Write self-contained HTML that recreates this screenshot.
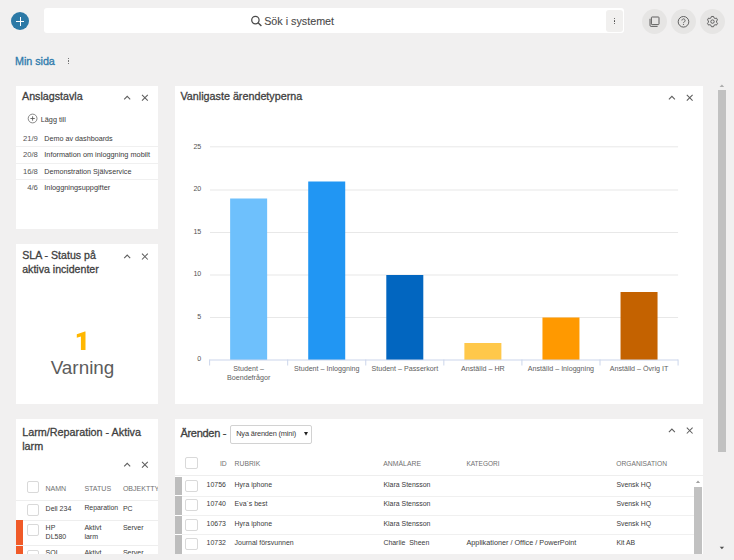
<!DOCTYPE html>
<html><head><meta charset="utf-8">
<style>
*{margin:0;padding:0;box-sizing:border-box}
html,body{width:734px;height:560px;overflow:hidden;background:#f1f0f0;font-family:"Liberation Sans",sans-serif;color:#3a3a3a}
.a{position:absolute}
.t{position:absolute;white-space:nowrap;line-height:1}
svg.a{overflow:visible}
.hs{-webkit-text-stroke:0.3px currentColor}
.cb{position:absolute;width:12.4px;height:12px;border:1px solid #d9d9d9;border-radius:2px;background:#fff}
</style></head><body>

<div class="a" style="left:11px;top:12px;width:18px;height:18px;background:#2c79a6;border-radius:50%"></div>
<div class="a" style="left:15.9px;top:20.85px;width:8.6px;height:1.15px;background:#fff;"></div>
<div class="a" style="left:19.72px;top:17.2px;width:1.15px;height:8.6px;background:#fff;"></div>
<div class="a" style="left:44px;top:7.9px;width:580px;height:25.6px;background:#fff;border-radius:3px"></div>
<svg class="a" style="left:0;top:0" width="1" height="1"><circle cx="255.4" cy="20.1" r="3.7" fill="none" stroke="#4a4a4a" stroke-width="1.25"/><line x1="258.1" y1="22.8" x2="261.4" y2="26.1" stroke="#4a4a4a" stroke-width="1.35"/></svg>
<div class="t hs" style="left:264.20px;top:15.76px;font-size:10.75px;color:#4a4a4a;-webkit-text-stroke:0.1px currentColor;">Sök i systemet</div>
<div class="a" style="left:606px;top:10px;width:16.5px;height:22px;background:#f1f0ef;border-radius:3px"></div>
<div class="a" style="left:613.5px;top:17.55px;width:1.5px;height:1.5px;background:#444;border-radius:50%"></div>
<div class="a" style="left:613.5px;top:20.05px;width:1.5px;height:1.5px;background:#444;border-radius:50%"></div>
<div class="a" style="left:613.5px;top:22.55px;width:1.5px;height:1.5px;background:#444;border-radius:50%"></div>
<div class="a" style="left:642px;top:8.5px;width:25px;height:25px;background:#e6e5e4;border-radius:50%"></div>
<div class="a" style="left:671px;top:8.5px;width:25px;height:25px;background:#e6e5e4;border-radius:50%"></div>
<div class="a" style="left:700px;top:8.5px;width:25px;height:25px;background:#e6e5e4;border-radius:50%"></div>
<svg class="a" style="left:642px;top:8.5px" width="25" height="25" viewBox="0 0 25 25">
 <rect x="9.4" y="8.0" width="7.6" height="7.6" rx="0.7" fill="none" stroke="#595959" stroke-width="0.95"/>
 <path d="M8.0 9.8 v6.5 a1.1 1.1 0 0 0 1.1 1.1 h6.5" fill="none" stroke="#595959" stroke-width="0.95"/>
</svg>
<svg class="a" style="left:671px;top:8.5px" width="25" height="25" viewBox="0 0 25 25">
 <circle cx="12.5" cy="12.8" r="5.3" fill="none" stroke="#595959" stroke-width="0.95"/>
 <path d="M10.9 11.5 a1.6 1.6 0 1 1 2.45 1.35 c-0.55 0.35 -0.85 0.65 -0.85 1.25" fill="none" stroke="#595959" stroke-width="0.95"/>
 <circle cx="12.5" cy="15.5" r="0.6" fill="#595959"/>
</svg>
<svg class="a" style="left:700px;top:8.5px" width="25" height="25" viewBox="0 0 25 25">
 <g transform="translate(12.5 12.6) scale(0.9) translate(-12.5 -12.5)">
 <circle cx="12.5" cy="12.5" r="1.9" fill="none" stroke="#595959" stroke-width="1.05"/>
 <path d="M11.3 6.8 h2.4 l0.4 1.5 l1.3 0.75 l1.5 -0.45 l1.2 2.1 l-1.1 1.1 v1.4 l1.1 1.1 l-1.2 2.1 l-1.5 -0.45 l-1.3 0.75 l-0.4 1.5 h-2.4 l-0.4 -1.5 l-1.3 -0.75 l-1.5 0.45 l-1.2 -2.1 l1.1 -1.1 v-1.4 l-1.1 -1.1 l1.2 -2.1 l1.5 0.45 l1.3 -0.75 z" fill="none" stroke="#595959" stroke-width="1.05" stroke-linejoin="round"/>
 </g>
</svg>
<div class="t hs" style="left:15.00px;top:56.22px;font-size:10.8px;color:#307cad;letter-spacing:-0.05px;-webkit-text-stroke:0.32px currentColor;">Min sida</div>
<div class="a" style="left:67.5px;top:58.1px;width:1.2px;height:1.2px;background:#777;"></div>
<div class="a" style="left:67.5px;top:60.4px;width:1.2px;height:1.2px;background:#777;"></div>
<div class="a" style="left:67.5px;top:62.699999999999996px;width:1.2px;height:1.2px;background:#777;"></div>
<div class="a" style="left:16px;top:86px;width:142px;height:143.2px;background:#fff;"></div>
<div class="a" style="left:16px;top:243.8px;width:142px;height:160.2px;background:#fff;"></div>
<div class="a" style="left:16px;top:418.8px;width:142px;height:135px;background:#fff;"></div>
<div class="a" style="left:175px;top:86px;width:528px;height:318.1px;background:#fff;"></div>
<div class="a" style="left:175px;top:418.8px;width:528px;height:134.8px;background:#fff;"></div>
<div class="t hs" style="left:22.00px;top:91.11px;font-size:10.7px;color:#404040;">Anslagstavla</div>
<svg class="a" style="left:0;top:0" width="1" height="1"><path d="M124.20 99.40 L127.20 96.30 L130.20 99.40" fill="none" stroke="#5e5e5e" stroke-width="1.05"/><path d="M142.00 94.90 L147.80 100.70 M147.80 94.90 L142.00 100.70" fill="none" stroke="#5e5e5e" stroke-width="1.05"/></svg>
<svg class="a" style="left:0;top:0" width="1" height="1"><circle cx="32.6" cy="118.5" r="4.4" fill="none" stroke="#6a6a6a" stroke-width="0.8"/><path d="M32.6 116.3 V120.7 M30.4 118.5 H34.8" stroke="#555" stroke-width="0.85"/></svg>
<div class="t" style="left:40.80px;top:115.84px;font-size:7.25px;color:#3a3a3a;">Lägg till</div>
<div class="t" style="left:7.60px;width:30px;text-align:right;top:134.81px;font-size:7.7px;color:#555;letter-spacing:-0.1px;">21/9</div>
<div class="t" style="left:44.30px;top:134.78px;font-size:7.2px;color:#3a3a3a;">Demo av dashboards</div>
<div class="t" style="left:7.60px;width:30px;text-align:right;top:151.21px;font-size:7.7px;color:#555;letter-spacing:-0.1px;">20/8</div>
<div class="t" style="left:44.30px;top:151.08px;font-size:7.32px;color:#3a3a3a;">Information om inloggning mobilt</div>
<div class="t" style="left:7.60px;width:30px;text-align:right;top:167.81px;font-size:7.7px;color:#555;letter-spacing:-0.1px;">16/8</div>
<div class="t" style="left:44.30px;top:167.78px;font-size:7.2px;color:#3a3a3a;">Demonstration Självservice</div>
<div class="t" style="left:7.60px;width:30px;text-align:right;top:183.86px;font-size:7.7px;color:#555;letter-spacing:-0.1px;">4/6</div>
<div class="t" style="left:44.30px;top:184.38px;font-size:7.32px;color:#3a3a3a;">Inloggningsuppgifter</div>
<div class="a" style="left:16px;top:146.0px;width:142px;height:1px;background:#f0f0f0;"></div>
<div class="a" style="left:16px;top:162.8px;width:142px;height:1px;background:#f0f0f0;"></div>
<div class="a" style="left:16px;top:179.4px;width:142px;height:1px;background:#f0f0f0;"></div>
<div class="t hs" style="left:22.20px;top:250.49px;font-size:10.6px;color:#404040;">SLA - Status på</div>
<div class="t hs" style="left:22.20px;top:264.39px;font-size:10.6px;color:#404040;">aktiva incidenter</div>
<svg class="a" style="left:0;top:0" width="1" height="1"><path d="M124.20 258.20 L127.20 255.10 L130.20 258.20" fill="none" stroke="#5e5e5e" stroke-width="1.05"/><path d="M142.00 253.70 L147.80 259.50 M147.80 253.70 L142.00 259.50" fill="none" stroke="#5e5e5e" stroke-width="1.05"/></svg>
<svg class="a" style="left:0;top:0" width="1" height="1"><path d="M85.5 331.6 V349.9 H80.9 V336.4 L76.8 337.7 V334.3 L84.9 331.6 Z" fill="#ffb700"/></svg>
<div class="t" style="left:22.50px;width:120px;text-align:center;top:359.13px;font-size:18.9px;color:#5c5c5c;">Varning</div>
<div class="t hs" style="left:22.20px;top:427.42px;font-size:10.8px;color:#404040;">Larm/Reparation - Aktiva</div>
<div class="t hs" style="left:22.20px;top:440.82px;font-size:10.8px;color:#404040;">larm</div>
<svg class="a" style="left:0;top:0" width="1" height="1"><path d="M124.20 466.40 L127.20 463.30 L130.20 466.40" fill="none" stroke="#5e5e5e" stroke-width="1.05"/><path d="M142.00 461.90 L147.80 467.70 M147.80 461.90 L142.00 467.70" fill="none" stroke="#5e5e5e" stroke-width="1.05"/></svg>
<div class="cb" style="left:26.8px;top:481px"></div>
<div class="t" style="left:45.40px;top:485.41px;font-size:7.05px;color:#707070;">NAMN</div>
<div class="t" style="left:84.40px;top:485.41px;font-size:7.05px;color:#707070;">STATUS</div>
<div class="a" style="left:16px;top:470px;width:142px;height:84px;overflow:hidden">
<div class="t" style="left:106.90px;top:15.41px;font-size:7.05px;color:#707070;">OBJEKTTYP</div>
</div>
<div class="a" style="left:16px;top:500px;width:142px;height:1px;background:#eeeeee;"></div>
<div class="cb" style="left:26.8px;top:504.2px"></div>
<div class="t" style="left:45.60px;top:505.25px;font-size:7.0px;color:#3a3a3a;">Dell 234</div>
<div class="t" style="left:84.40px;top:505.33px;font-size:6.9px;color:#3a3a3a;">Reparation</div>
<div class="t" style="left:122.90px;top:505.25px;font-size:7.0px;color:#3a3a3a;">PC</div>
<div class="a" style="left:16px;top:519.5px;width:142px;height:1px;background:#eeeeee;"></div>
<div class="a" style="left:16px;top:520.2px;width:7px;height:25px;background:#f05a28;"></div>
<div class="cb" style="left:26.8px;top:523.5px"></div>
<div class="t" style="left:45.60px;top:524.25px;font-size:7.0px;color:#3a3a3a;">HP</div>
<div class="t" style="left:45.60px;top:533.05px;font-size:7.0px;color:#3a3a3a;">DL580</div>
<div class="t" style="left:84.40px;top:524.25px;font-size:7.0px;color:#3a3a3a;">Aktivt</div>
<div class="t" style="left:84.40px;top:533.05px;font-size:7.0px;color:#3a3a3a;">larm</div>
<div class="t" style="left:122.90px;top:524.25px;font-size:7.0px;color:#3a3a3a;">Server</div>
<div class="a" style="left:16px;top:545.2px;width:142px;height:1px;background:#eeeeee;"></div>
<div class="a" style="left:16px;top:546px;width:142px;height:8px;overflow:hidden">
<div class="a" style="left:0px;top:0.2px;width:7px;height:8px;background:#f05a28;"></div>
<div class="cb" style="left:10.8px;top:3.5px"></div>
<div class="t" style="left:29.60px;top:3.45px;font-size:7.0px;color:#3a3a3a;">SQL</div>
<div class="t" style="left:68.40px;top:3.45px;font-size:7.0px;color:#3a3a3a;">Aktivt</div>
<div class="t" style="left:106.90px;top:3.45px;font-size:7.0px;color:#3a3a3a;">Server</div>
</div>
<div class="t hs" style="left:180.50px;top:91.36px;font-size:10.75px;color:#404040;">Vanligaste ärendetyperna</div>
<svg class="a" style="left:0;top:0" width="1" height="1"><path d="M668.90 99.40 L671.90 96.30 L674.90 99.40" fill="none" stroke="#5e5e5e" stroke-width="1.05"/><path d="M686.80 94.90 L692.60 100.70 M692.60 94.90 L686.80 100.70" fill="none" stroke="#5e5e5e" stroke-width="1.05"/></svg>
<svg class="a" style="left:0;top:0" width="734" height="560" viewBox="0 0 734 560">
<rect x="210.0" y="317.00" width="468.08" height="1" fill="#e8e8e8"/>
<rect x="210.0" y="274.50" width="468.08" height="1" fill="#e8e8e8"/>
<rect x="210.0" y="232.00" width="468.08" height="1" fill="#e8e8e8"/>
<rect x="210.0" y="189.50" width="468.08" height="1" fill="#e8e8e8"/>
<rect x="210.0" y="146.30" width="468.08" height="1" fill="#e8e8e8"/>
<rect x="230.14" y="198.50" width="37" height="161.50" fill="#6ec0fc"/>
<rect x="308.22" y="181.50" width="37" height="178.50" fill="#2196f3"/>
<rect x="386.30" y="275.00" width="37" height="85.00" fill="#0266c0"/>
<rect x="464.38" y="343.00" width="37" height="17.00" fill="#ffc84a"/>
<rect x="542.46" y="317.50" width="37" height="42.50" fill="#ff9900"/>
<rect x="620.54" y="292.00" width="37" height="68.00" fill="#c46200"/>
<rect x="209.6" y="359.5" width="468.48" height="1" fill="#ccd6eb"/>
<rect x="209.10" y="359.5" width="1" height="6" fill="#ccd6eb"/>
<rect x="287.18" y="359.5" width="1" height="6" fill="#ccd6eb"/>
<rect x="365.26" y="359.5" width="1" height="6" fill="#ccd6eb"/>
<rect x="443.34" y="359.5" width="1" height="6" fill="#ccd6eb"/>
<rect x="521.42" y="359.5" width="1" height="6" fill="#ccd6eb"/>
<rect x="599.50" y="359.5" width="1" height="6" fill="#ccd6eb"/>
<rect x="677.58" y="359.5" width="1" height="6" fill="#ccd6eb"/>
</svg>
<div class="t" style="left:171.30px;width:30px;text-align:right;top:356.46px;font-size:7.1px;color:#555555;">0</div>
<div class="t" style="left:171.30px;width:30px;text-align:right;top:313.96px;font-size:7.1px;color:#555555;">5</div>
<div class="t" style="left:171.30px;width:30px;text-align:right;top:271.46px;font-size:7.1px;color:#555555;">10</div>
<div class="t" style="left:171.30px;width:30px;text-align:right;top:228.97px;font-size:7.1px;color:#555555;">15</div>
<div class="t" style="left:171.30px;width:30px;text-align:right;top:186.47px;font-size:7.1px;color:#555555;">20</div>
<div class="t" style="left:171.30px;width:30px;text-align:right;top:143.97px;font-size:7.1px;color:#555555;">25</div>
<div class="t" style="left:203.64px;width:90px;text-align:center;top:365.10px;font-size:7.15px;color:#606060;line-height:8.4px;">Student –<br>Boendefrågor</div>
<div class="t" style="left:281.72px;width:90px;text-align:center;top:365.10px;font-size:7.15px;color:#606060;line-height:8.4px;">Student – Inloggning</div>
<div class="t" style="left:359.80px;width:90px;text-align:center;top:365.10px;font-size:7.15px;color:#606060;line-height:8.4px;">Student – Passerkort</div>
<div class="t" style="left:437.88px;width:90px;text-align:center;top:365.10px;font-size:7.15px;color:#606060;line-height:8.4px;">Anställd – HR</div>
<div class="t" style="left:515.96px;width:90px;text-align:center;top:365.10px;font-size:7.15px;color:#606060;line-height:8.4px;">Anställd – Inloggning</div>
<div class="t" style="left:594.04px;width:90px;text-align:center;top:365.10px;font-size:7.15px;color:#606060;line-height:8.4px;">Anställd – Övrig IT</div>
<div class="t hs" style="left:180.40px;top:427.95px;font-size:11.0px;color:#404040;letter-spacing:-0.28px;">Ärenden -</div>
<div class="a" style="left:230.4px;top:424.6px;width:81.2px;height:19.0px;border:1px solid #d2d2d2;border-radius:2px;background:#fff"></div>
<div class="t" style="left:236.20px;top:429.91px;font-size:7.4px;color:#3a3a3a;letter-spacing:-0.17px;">Nya ärenden (mini)</div>
<svg class="a" style="left:0;top:0" width="1" height="1"><path d="M304.0 432.1 H308.0 L306 435.7 Z" fill="#222"/></svg>
<svg class="a" style="left:0;top:0" width="1" height="1"><path d="M668.90 432.20 L671.90 429.10 L674.90 432.20" fill="none" stroke="#5e5e5e" stroke-width="1.05"/><path d="M686.80 427.70 L692.60 433.50 M692.60 427.70 L686.80 433.50" fill="none" stroke="#5e5e5e" stroke-width="1.05"/></svg>
<div class="cb" style="left:185.2px;top:457px"></div>
<div class="t" style="left:196.80px;width:30px;text-align:right;top:461.22px;font-size:6.8px;color:#707070;">ID</div>
<div class="t" style="left:234.60px;top:461.22px;font-size:6.8px;color:#707070;">RUBRIK</div>
<div class="t" style="left:383.30px;top:461.18px;font-size:6.85px;color:#707070;">ANMÄLARE</div>
<div class="t" style="left:466.40px;top:461.48px;font-size:6.5px;color:#707070;">KATEGORI</div>
<div class="t" style="left:616.30px;top:461.32px;font-size:6.68px;color:#707070;">ORGANISATION</div>
<div class="a" style="left:175px;top:475.3px;width:528px;height:1px;background:#eeeeee;"></div>
<div class="a" style="left:175px;top:476.7px;width:7px;height:18.8px;background:#bdbdbd;"></div>
<div class="cb" style="left:185.2px;top:480.30px"></div>
<div class="t" style="left:195.90px;width:30px;text-align:right;top:481.69px;font-size:6.95px;color:#3a3a3a;">10756</div>
<div class="t" style="left:234.60px;top:481.69px;font-size:6.95px;color:#3a3a3a;">Hyra iphone</div>
<div class="t" style="left:383.40px;top:481.69px;font-size:6.95px;color:#3a3a3a;">Klara Stensson</div>
<div class="t" style="left:616.40px;top:481.78px;font-size:6.85px;color:#3a3a3a;">Svensk HQ</div>
<div class="a" style="left:182px;top:495.5px;width:511.5px;height:1px;background:#f0f0f0;"></div>
<div class="a" style="left:175px;top:495.8px;width:7px;height:19.4px;background:#bdbdbd;"></div>
<div class="cb" style="left:185.2px;top:499.40px"></div>
<div class="t" style="left:195.90px;width:30px;text-align:right;top:501.29px;font-size:6.95px;color:#3a3a3a;">10740</div>
<div class="t" style="left:234.60px;top:501.29px;font-size:6.95px;color:#3a3a3a;">Eva´s best</div>
<div class="t" style="left:383.40px;top:501.29px;font-size:6.95px;color:#3a3a3a;">Klara Stensson</div>
<div class="t" style="left:616.40px;top:501.38px;font-size:6.85px;color:#3a3a3a;">Svensk HQ</div>
<div class="a" style="left:182px;top:515.2px;width:511.5px;height:1px;background:#f0f0f0;"></div>
<div class="a" style="left:175px;top:515.5px;width:7px;height:18.8px;background:#bdbdbd;"></div>
<div class="cb" style="left:185.2px;top:519.10px"></div>
<div class="t" style="left:195.90px;width:30px;text-align:right;top:520.89px;font-size:6.95px;color:#3a3a3a;">10673</div>
<div class="t" style="left:234.60px;top:520.89px;font-size:6.95px;color:#3a3a3a;">Hyra iphone</div>
<div class="t" style="left:383.40px;top:520.89px;font-size:6.95px;color:#3a3a3a;">Klara Stensson</div>
<div class="t" style="left:616.40px;top:520.98px;font-size:6.85px;color:#3a3a3a;">Svensk HQ</div>
<div class="a" style="left:182px;top:534.3px;width:511.5px;height:1px;background:#f0f0f0;"></div>
<div class="a" style="left:175px;top:534.6px;width:7px;height:19.0px;background:#bdbdbd;"></div>
<div class="cb" style="left:185.2px;top:538.20px"></div>
<div class="t" style="left:195.90px;width:30px;text-align:right;top:540.39px;font-size:6.95px;color:#3a3a3a;">10732</div>
<div class="t" style="left:234.60px;top:540.39px;font-size:6.95px;color:#3a3a3a;">Journal försvunnen</div>
<div class="t" style="left:383.40px;top:540.39px;font-size:6.95px;color:#3a3a3a;">Charlie&nbsp; Sheen</div>
<div class="t" style="left:466.50px;top:539.13px;font-size:7.26px;color:#3a3a3a;">Applikationer / Office / PowerPoint</div>
<div class="t" style="left:616.40px;top:540.48px;font-size:6.85px;color:#3a3a3a;">Kit AB</div>
<div class="a" style="left:694.1px;top:486.9px;width:7.5px;height:66.7px;background:#c1c1c1;"></div>
<svg class="a" style="left:0;top:0" width="1" height="1"><path d="M695.9 483 L698 480.6 L700.1 483 Z" fill="#a0a0a0"/></svg>
<div class="a" style="left:718px;top:90px;width:7.7px;height:361.7px;background:#c1c1c1;"></div>
<svg class="a" style="left:0;top:0" width="1" height="1"><path d="M719.6 87 L721.9 84.4 L724.2 87 Z" fill="#adadad"/><path d="M719.7 546.8 L721.9 549.3 L724.1 546.8 Z" fill="#505050"/></svg>
</body></html>
